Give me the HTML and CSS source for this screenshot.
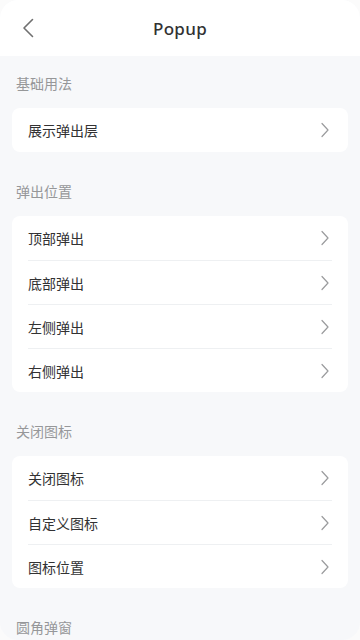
FILE: index.html
```html
<!DOCTYPE html>
<html lang="zh">
<head>
<meta charset="utf-8">
<title>Popup</title>
<link rel="stylesheet" href="styles.css">
</head>
<body>
<div class="app">
  <header class="nav">
    <span class="back">
      <svg width="12" height="20" viewBox="0 0 12 20"><polyline points="10.5,1.5 2,10 10.5,18.5" fill="none" stroke="#707070" stroke-width="1.6" stroke-linecap="round" stroke-linejoin="round"/></svg>
    </span>
    <h1 class="title">Popup</h1>
  </header>

  <section class="group">
    <h2 class="group-title">基础用法</h2>
    <div class="card">
      <div class="cell"><span class="cell-text">展示弹出层</span><svg class="arrow" width="16" height="16" viewBox="0 0 16 16"><polyline points="5,1.5 11,8 5,14.5" fill="none" stroke="#9a9b9d" stroke-width="1.2" stroke-linecap="round" stroke-linejoin="round"/></svg></div>
    </div>
  </section>

  <section class="group">
    <h2 class="group-title">弹出位置</h2>
    <div class="card">
      <div class="cell"><span class="cell-text">顶部弹出</span><svg class="arrow" width="16" height="16" viewBox="0 0 16 16"><polyline points="5,1.5 11,8 5,14.5" fill="none" stroke="#9a9b9d" stroke-width="1.2" stroke-linecap="round" stroke-linejoin="round"/></svg></div>
      <div class="cell"><span class="cell-text">底部弹出</span><svg class="arrow" width="16" height="16" viewBox="0 0 16 16"><polyline points="5,1.5 11,8 5,14.5" fill="none" stroke="#9a9b9d" stroke-width="1.2" stroke-linecap="round" stroke-linejoin="round"/></svg></div>
      <div class="cell"><span class="cell-text">左侧弹出</span><svg class="arrow" width="16" height="16" viewBox="0 0 16 16"><polyline points="5,1.5 11,8 5,14.5" fill="none" stroke="#9a9b9d" stroke-width="1.2" stroke-linecap="round" stroke-linejoin="round"/></svg></div>
      <div class="cell"><span class="cell-text">右侧弹出</span><svg class="arrow" width="16" height="16" viewBox="0 0 16 16"><polyline points="5,1.5 11,8 5,14.5" fill="none" stroke="#9a9b9d" stroke-width="1.2" stroke-linecap="round" stroke-linejoin="round"/></svg></div>
    </div>
  </section>

  <section class="group">
    <h2 class="group-title">关闭图标</h2>
    <div class="card">
      <div class="cell"><span class="cell-text">关闭图标</span><svg class="arrow" width="16" height="16" viewBox="0 0 16 16"><polyline points="5,1.5 11,8 5,14.5" fill="none" stroke="#9a9b9d" stroke-width="1.2" stroke-linecap="round" stroke-linejoin="round"/></svg></div>
      <div class="cell"><span class="cell-text">自定义图标</span><svg class="arrow" width="16" height="16" viewBox="0 0 16 16"><polyline points="5,1.5 11,8 5,14.5" fill="none" stroke="#9a9b9d" stroke-width="1.2" stroke-linecap="round" stroke-linejoin="round"/></svg></div>
      <div class="cell"><span class="cell-text">图标位置</span><svg class="arrow" width="16" height="16" viewBox="0 0 16 16"><polyline points="5,1.5 11,8 5,14.5" fill="none" stroke="#9a9b9d" stroke-width="1.2" stroke-linecap="round" stroke-linejoin="round"/></svg></div>
    </div>
  </section>

  <section class="group">
    <h2 class="group-title">圆角弹窗</h2>
  </section>
</div>
</body>
</html>
```
FILE: styles.css
```css
html, body {
  margin: 0;
  padding: 0;
  background: #fbfbfb;
}
body {
  font-family: "Noto Sans", "Noto Sans CJK SC", sans-serif;
}
.app {
  width: 360px;
  height: 640px;
  overflow: hidden;
  border-radius: 18px;
  background: #f7f8fa;
}
.nav {
  height: 56px;
  background: #fff;
  display: flex;
  align-items: center;
  justify-content: center;
  position: relative;
}
.back {
  position: absolute;
  left: 22px;
  top: 18px;
  display: flex;
}
.title {
  margin: 0;
  font-size: 17px;
  font-weight: 500;
  color: #323233;
  letter-spacing: 0.3px;
}
.group {
  margin-bottom: 12px;
}
.group-title {
  margin: 0;
  padding: 19px 16px 17px;
  font-size: 14px;
  line-height: 16px;
  height: 16px;
  font-weight: 400;
  color: #969799;
  font-family: "Noto Sans CJK SC", sans-serif;
}
.card {
  margin: 0 12px;
  background: #fff;
  border-radius: 8px;
  overflow: hidden;
}
.cell {
  height: 44px;
  margin: 0 16px;
  display: flex;
  align-items: center;
  justify-content: space-between;
  border-top: 1px solid #eef0f2;
  box-sizing: border-box;
}
.cell:first-child {
  border-top: none;
}
.cell-text {
  font-size: 14px;
  line-height: 20px;
  color: #323233;
  font-family: "Noto Sans CJK SC", sans-serif;
}
.arrow {
  display: block;
  margin-right: -1px;
}
```
